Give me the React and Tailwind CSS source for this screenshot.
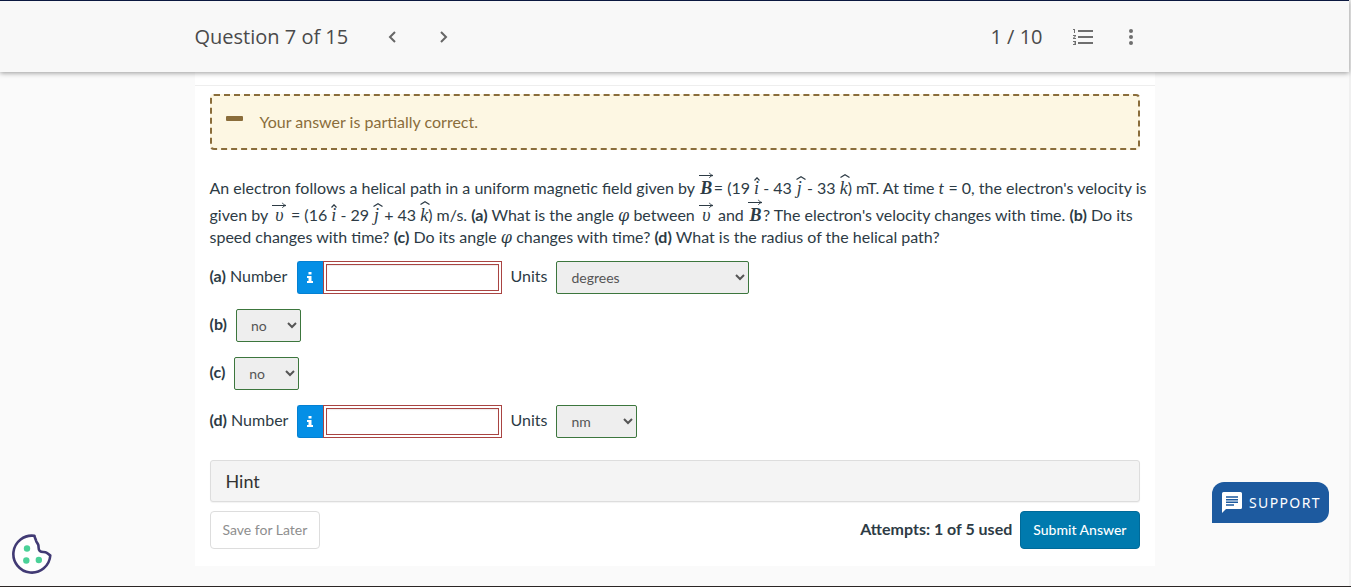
import React from "react";

const SERIF = "font-['Liberation_Serif',serif] leading-none";

function Vec({ children, bold }) {
  return (
    <span className="relative inline-block w-[15px] pt-[5px] text-center">
      <svg
        viewBox="0 0 15 6"
        className={bold ? "absolute left-0 top-0 h-[6px] w-[15px]" : "absolute left-0 top-[3px] h-[6px] w-[15px]"}
        fill="none"
        stroke="currentColor"
        aria-hidden="true"
      >
        <path d="M0 3.500h14M10.500 .8c.4 1.400 1.700 2.300 3.500 2.700-1.800.3-3.100 1.100-3.500 2.300" />
      </svg>
      <i className={bold ? `${SERIF} text-lg font-bold` : `${SERIF} text-lg`}>{children}</i>
    </span>
  );
}

const HATS = {
  i: { box: "w-[5px]", hat: "left-0 top-[5px] w-[6px]", view: "0 0 6 4", d: "M.5 3.500 3 .8l2.500 2.700" },
  j: { box: "w-[7px]", hat: "left-0 top-1 w-[10px]", view: "0 0 10 4", d: "M.5 3.500 5 .8l4.500 2.700" },
  k: { box: "w-2", hat: "left-0 top-[2px] w-[10px]", view: "0 0 10 4", d: "M.5 3.500 5 .8l4.500 2.700" },
};

function Unit({ name }) {
  const h = HATS[name];
  return (
    <span className={`relative inline-block pt-[5px] text-center ${h.box}`}>
      <svg viewBox={h.view} className={`absolute h-1 ${h.hat}`} fill="none" stroke="currentColor" strokeWidth="1.200" aria-hidden="true">
        <path d={h.d} />
      </svg>
      <i className={`${SERIF} text-lg`}>{name}</i>
    </span>
  );
}

function Phi() {
  return <i className="font-['DejaVu_Serif',serif] text-base leading-none">φ</i>;
}

function Choice({ id, value, className }) {
  return (
    <select
      id={id}
      defaultValue={value}
      className={`h-[33px] rounded-[2px] border border-[#3c763d] bg-[#eeeeee] pl-[10px] text-sm text-[#555555] ${className}`}
    >
      <option>{value}</option>
    </select>
  );
}

function NumberField({ id, part }) {
  return (
    <div className="flex">
      <button type="button" aria-label={`Number format for part ${part}`} className="flex h-[33px] w-[26px] items-center justify-center rounded-l-[3px] border border-r-0 border-[#0480d2] bg-[#048fe6] text-white">
        <svg viewBox="0 0 6 11" className="h-[11px] w-[6px]" fill="currentColor" aria-hidden="true">
          <path d="M1.500 0h3v2.500h-3zM0 4h4.500v5H6v2H0V9h1.500V6H0z" />
        </svg>
      </button>
      <div className="flex h-[33px] w-[179px] border border-[#a94442] p-[2px]">
        <input id={id} type="text" className="w-full min-w-0 border border-[#a94442] px-2 text-sm shadow-[inset_0_1px_1px_rgba(0,0,0,0.08)] outline-none" />
      </div>
    </div>
  );
}

function NumberRow({ part, unit, className }) {
  return (
    <div className="flex items-center">
      <label htmlFor={`num-${part}`} className="w-[87px] pb-[3px] whitespace-nowrap">
        <b>({part})</b> Number
      </label>
      <NumberField id={`num-${part}`} part={part} />
      <label htmlFor={`unit-${part}`} className="mx-[9px] pb-[3px]">Units</label>
      <Choice id={`unit-${part}`} value={unit} className={className} />
    </div>
  );
}

function ChoiceRow({ part, value }) {
  return (
    <div className="flex items-center gap-[9px]">
      <label htmlFor={`choice-${part}`} className="pb-[3px] font-bold">({part})</label>
      <Choice id={`choice-${part}`} value={value} className="w-[65px]" />
    </div>
  );
}

function Header() {
  return (
    <header className="relative z-10 border-t border-[#0b1840] bg-[#f8f8f8] shadow-[0_1px_5px_rgba(0,0,0,0.4)]">
      <div className="mx-auto flex h-[71px] max-w-[960px] items-center font-['Open_Sans','Noto_Sans',sans-serif] text-xl text-[#4a4a4a]">
        <h1>Question 7 of 15</h1>
        <button type="button" aria-label="Previous question" className="ml-8 flex size-6 items-center justify-center text-[#666]">
          <svg viewBox="0 0 8 12" className="h-3 w-2" fill="none" stroke="currentColor" strokeWidth="2"><path d="M7 1 2 6l5 5" /></svg>
        </button>
        <button type="button" aria-label="Next question" className="ml-7 flex size-6 items-center justify-center text-[#666]">
          <svg viewBox="0 0 8 12" className="h-3 w-2" fill="none" stroke="currentColor" strokeWidth="2"><path d="m1 1 5 5-5 5" /></svg>
        </button>
        <span className="ml-auto">1 / 10</span>
        <button type="button" aria-label="Question list" className="ml-7 flex size-6 items-center justify-center text-[#6f6f6f]">
          <svg viewBox="2 4 20 16" className="h-4 w-5" fill="currentColor">
            <path d="M2 17h2v.5H3v1h1v.5H2v1h3v-4H2v1zm1-9h1V4H2v1h1v3zm-1 3h1.800L2 13.100v.9h3v-1H3.200L5 10.900V10H2v1zm5-6v2h15V5H7zm0 14h15v-2H7v2zm0-6h15v-2H7v2z" />
          </svg>
        </button>
        <button type="button" aria-label="More options" className="ml-6 mr-3 flex size-6 items-center justify-center text-[#6f6f6f]">
          <svg viewBox="0 0 4 16" className="h-4 w-1" fill="currentColor"><circle cx="2" cy="2" r="2" /><circle cx="2" cy="8" r="2" /><circle cx="2" cy="14" r="2" /></svg>
        </button>
      </div>
    </header>
  );
}

export default function App() {
  return (
    <div className="flex min-h-screen flex-col border-b border-b-[#2b2625] bg-[#fafafa] font-['Lato',sans-serif] text-base leading-[22px] text-[#2d3b45]">
      <div className="flex grow flex-col border-r-2 border-[#f0f0f0]">
        <Header />
        <main className="mx-auto w-full max-w-[960px] bg-white pb-[17px]">
          <div className="h-[14px] border-b border-[#eeeeee]" />
          <div className="px-[15px] pt-2">
            <div role="status" className="flex h-14 items-center gap-[17px] rounded-[4px] border-2 border-dashed border-[#8a6d3b] bg-[#fdf7e3] px-[14px] text-[#8a6d3b]">
              <span className="mb-2 h-[5px] w-[17px] rounded-[1px] bg-[#8a6d3b]" />
              <span>Your answer is partially correct.</span>
            </div>

            <p className="-mr-3 mt-[22px]">
              An electron follows a helical path in a uniform magnetic field given by{" "}
              <Vec bold>B</Vec>= (19 <Unit name="i" /> - 43 <Unit name="j" /> - 33 <Unit name="k" />) mT. At time <i>t</i> = 0, the electron's velocity is given by{" "}
              <Vec>υ</Vec> = (16 <Unit name="i" /> - 29 <Unit name="j" /> + 43 <Unit name="k" />) m/s. <b>(a)</b> What is the angle <Phi /> between{" "}
              <Vec>υ</Vec> and <Vec bold>B</Vec>? The electron's velocity changes with time. <b>(b)</b> Do its speed changes with time? <b>(c)</b> Do its angle{" "}
              <Phi /> changes with time? <b>(d)</b> What is the radius of the helical path?
            </p>

            <form className="mt-[13px]" onSubmit={(e) => e.preventDefault()}>
              <div className="flex flex-col gap-[15px]">
                <NumberRow part="a" unit="degrees" className="w-[193px]" />
                <ChoiceRow part="b" value="no" />
                <ChoiceRow part="c" value="no" />
                <NumberRow part="d" unit="nm" className="w-[81px]" />
              </div>

              <button type="button" className="mt-[22px] flex h-[42px] w-full items-center rounded-[3px] border border-[#dddddd] bg-[#f4f4f4] px-[15px] text-lg leading-[22px] text-[#333333] shadow-[0_1px_1px_rgba(0,0,0,0.05)]">
                Hint
              </button>

              <div className="mt-[9px] flex items-center">
                <button type="button" className="h-[38px] rounded-[4px] border border-[#dddddd] bg-white px-3 text-sm text-[#8e8e8e]">Save for Later</button>
                <span className="ml-auto mr-2 pb-[3px] font-bold">Attempts: 1 of 5 used</span>
                <button type="submit" className="h-[38px] rounded-[4px] border border-[#006a99] bg-[#007aae] px-3 text-sm font-medium text-white">Submit Answer</button>
              </div>
            </form>
          </div>
        </main>
      </div>

      <button type="button" aria-label="Cookie settings" className="fixed bottom-[13px] left-3 size-10">
        <svg viewBox="0 0 40 40" className="size-10" aria-hidden="true">
          <path d="M22.500 1.800A18.500 18.500 0 1 0 38.300 21.500C36.500 20.500 35.500 18.700 33.500 18.200C31.500 17.700 29.500 18.500 27.800 17C25.800 15.200 27 13 26.300 11C25.700 9.300 24.500 8.500 24 6.500C23.700 5 22.500 3.500 22.500 1.800Z" fill="#fff" stroke="#413a74" strokeWidth="2.600" strokeLinejoin="round" />
          <circle cx="15" cy="14.500" r="3.200" fill="#4bd198" />
          <circle cx="14.300" cy="26.500" r="3.200" fill="#4bd198" />
          <circle cx="26.800" cy="26" r="3.200" fill="#4bd198" />
        </svg>
      </button>

      <button type="button" className="fixed bottom-16 right-[22px] flex h-[41px] items-center gap-[7px] rounded-xl rounded-bl-none bg-[#1d5a9f] pl-[10px] pr-2 font-['Noto_Sans',sans-serif] text-sm tracking-widest text-white">
        <svg viewBox="0 0 20 21" className="h-[21px] w-5" aria-hidden="true">
          <path d="M1.500 0h17Q20 0 20 1.500V15.500Q20 17 18.500 17H4L0 21V1.500Q0 0 1.500 0Z" fill="#fff" />
          <path d="M4 5h12M4 7.700h12M4 10.300h12M4 13h8" stroke="#1d5a9f" strokeWidth="1.400" />
        </svg>
        SUPPORT
      </button>
    </div>
  );
}
